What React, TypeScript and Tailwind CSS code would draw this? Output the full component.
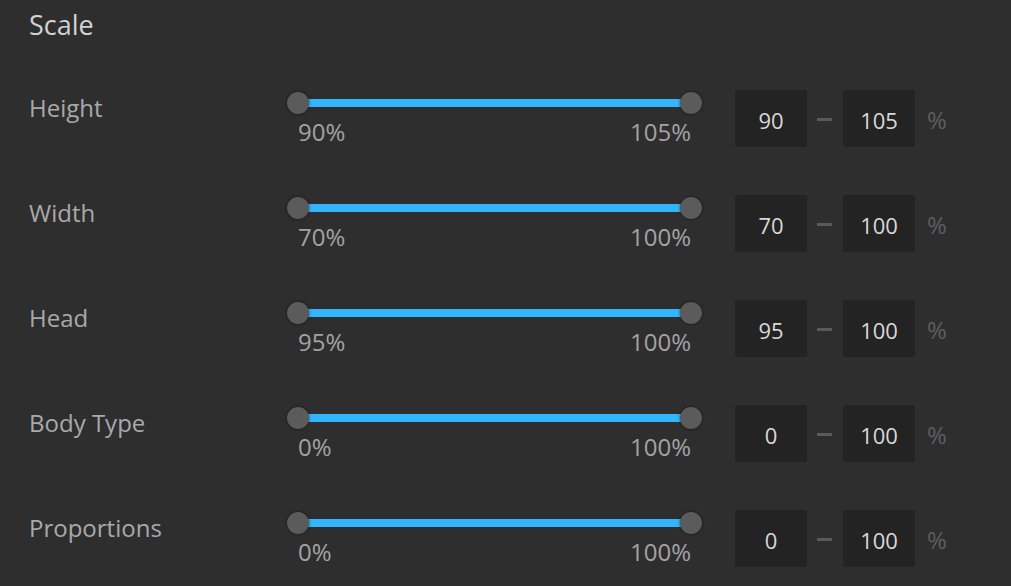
const rows = [
  { label: "Height", min: 90, max: 105 },
  { label: "Width", min: 70, max: 100 },
  { label: "Head", min: 95, max: 100 },
  { label: "Body Type", min: 0, max: 100 },
  { label: "Proportions", min: 0, max: 100 },
]

const RangeSlider = ({ min, max }: { min: number; max: number }) => {
  return (
    <div className="w-[415px] flex flex-col">
      <div className="relative h-[22px] mt-[14px]">
        <div className="absolute left-[11px] right-[11px] top-[7px] h-[8px] bg-[#33b5fd]" />
        <div className="absolute left-0 top-0 w-[22px] h-[22px] rounded-full bg-[#5b5b5b] shadow-[0_0_3px_rgba(0,0,0,0.6)]" />
        <div className="absolute right-0 top-0 w-[22px] h-[22px] rounded-full bg-[#5b5b5b] shadow-[0_0_3px_rgba(0,0,0,0.6)]" />
      </div>
      <div className="flex justify-between px-[11px] mt-[6px] text-[24px] leading-[24px] text-[#a3a3a3]">
        <span>{min}%</span>
        <span>{max}%</span>
      </div>
    </div>
  )
}

const NumBox = ({ value }: { value: number }) => (
  <div className="mt-[12px] w-[72px] h-[57px] bg-[#232323] rounded-[3px] flex items-center justify-center pt-[3px] text-[22px] leading-[22px] text-[#d8d8d8]">
    {value}
  </div>
)

const App = () => {
  return (
    <div
      className="w-[1011px] h-[586px] overflow-hidden bg-[#2e2e2e] pl-[29px]"
      style={{ fontFamily: '"Open Sans", "Noto Sans", sans-serif' }}
    >
      {/* HEADER */}
      <div className="h-[78px] pt-[11px] text-[27px] leading-[27px] text-[#d2d2d2]">Scale</div>

      {/* ROWS */}
      {rows.map((r) => (
        <div key={r.label} className="flex items-start h-[105px]">
          <div className="w-[258px] mt-[18px] text-[24px] leading-[24px] text-[#a9a9a9]">{r.label}</div>
          <RangeSlider min={r.min} max={r.max} />
          <div className="ml-[33px] flex items-start">
            <NumBox value={r.min} />
            <div className="mt-[40px] mx-[10px] w-[15px] h-[3px] bg-[#5a5a5a]" />
            <div className="ml-px">
              <NumBox value={r.max} />
            </div>
            <div className="ml-[12px] mt-[30px] text-[24px] leading-[24px] text-[#5e5e5e]">%</div>
          </div>
        </div>
      ))}
    </div>
  )
}

export default App
